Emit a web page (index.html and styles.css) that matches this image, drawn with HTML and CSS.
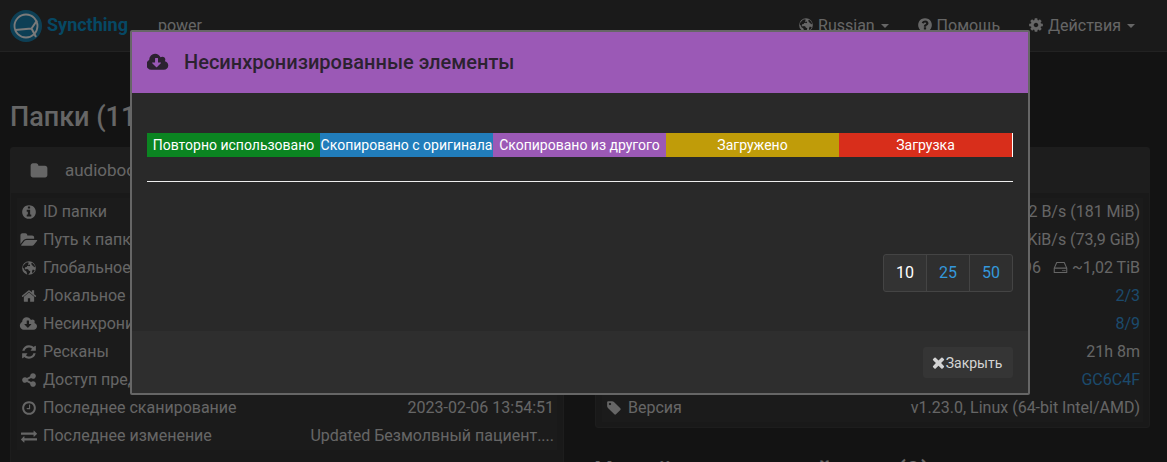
FILE: index.html
```html
<!DOCTYPE html>
<html lang="ru">
<head>
<meta charset="utf-8">
<title>Syncthing</title>
<link rel="stylesheet" href="styles.css">
</head>
<body>
<svg class="defs" xmlns="http://www.w3.org/2000/svg">
  <symbol id="i-folder" viewBox="0 0 1792 1792"><path d="M1728 608v704q0 92-66 158t-158 66h-1216q-92 0-158-66t-66-158v-960q0-92 66-158t158-66h320q92 0 158 66t66 158v32h672q92 0 158 66t66 158z"/></symbol>
  <symbol id="i-home" viewBox="0 0 1792 1792"><path d="M1472 992v480q0 26-19 45t-45 19h-384v-384h-256v384h-384q-26 0-45-19t-19-45v-480q0-1 .5-3t.5-3l575-474 575 474q1 2 1 6zm223-69l-62 74q-8 9-21 11h-3q-13 0-21-7l-692-577-692 577q-12 8-24 7-13-2-21-11l-62-74q-8-10-7-23.5t11-21.5l719-599q32-26 76-26t76 26l244 204v-195q0-14 9-23t23-9h192q14 0 23 9t9 23v408l219 182q10 8 11 21.5t-7 23.5z"/></symbol>
  <symbol id="i-info" viewBox="0 0 1792 1792"><path d="M1152 1376v-160q0-14-9-23t-23-9h-96v-512q0-14-9-23t-23-9h-320q-14 0-23 9t-9 23v160q0 14 9 23t23 9h96v320h-96q-14 0-23 9t-9 23v160q0 14 9 23t23 9h448q14 0 23-9t9-23zm-128-896v-160q0-14-9-23t-23-9h-192q-14 0-23 9t-9 23v160q0 14 9 23t23 9h192q14 0 23-9t9-23zm640 416q0 209-103 385.5t-279.5 279.5-385.5 103-385.5-103-279.5-279.5-103-385.5 103-385.5 279.5-279.5 385.5-103 385.5 103 279.5 279.5 103 385.5z"/></symbol>
  <symbol id="i-question" viewBox="0 0 1792 1792"><path d="M1024 1376v-192q0-14-9-23t-23-9h-192q-14 0-23 9t-9 23v192q0 14 9 23t23 9h192q14 0 23-9t9-23zm256-672q0-88-55.5-163t-138.5-116-170-41q-243 0-371 213-15 24 8 42l132 100q7 6 19 6 16 0 25-12 53-68 86-92 34-24 86-24 48 0 85.5 26t37.5 59q0 38-20 61t-68 45q-63 28-115.5 86.5t-52.5 125.5v36q0 14 9 23t23 9h192q14 0 23-9t9-23q0-19 21.5-49.5t54.5-49.5q32-18 49-28.5t46-35 44.5-48 28-60.5 12.5-81zm384 192q0 209-103 385.5t-279.5 279.5-385.5 103-385.5-103-279.5-279.5-103-385.5 103-385.5 279.5-279.5 385.5-103 385.5 103 279.5 279.5 103 385.5z"/></symbol>
  <symbol id="i-cog" viewBox="0 0 1792 1792"><path d="M1152 896q0-106-75-181t-181-75-181 75-75 181 75 181 181 75 181-75 75-181zm512-109v222q0 12-8 23t-20 13l-185 28q-19 54-39 91 35 50 107 138 10 12 10 25t-9 23q-27 37-99 108t-94 71q-12 0-26-9l-138-108q-44 23-91 38-16 136-29 186-7 28-36 28h-222q-14 0-24.5-8.5t-11.5-21.5l-28-184q-49-16-90-37l-141 107q-10 9-25 9-14 0-25-11-126-114-165-168-7-10-7-23 0-12 8-23 15-21 51-66.5t54-70.5q-27-50-41-99l-183-27q-13-2-21-12.5t-8-23.5v-222q0-12 8-23t19-13l186-28q14-46 39-92-40-57-107-138-10-12-10-24 0-10 9-23 26-36 98.5-107.5t94.5-71.5q13 0 26 10l138 107q44-23 91-38 16-136 29-186 7-28 36-28h222q14 0 24.5 8.5t11.5 21.5l28 184q49 16 90 37l142-107q9-9 24-9 13 0 25 10 129 119 165 170 7 8 7 22 0 12-8 23-15 21-51 66.5t-54 70.5q26 50 41 98l183 28q13 2 21 12.5t8 23.5z"/></symbol>
  <symbol id="i-cloud" viewBox="0 0 1920 1792"><path d="M1216 928q0-14-9-23t-23-9h-224v-352q0-13-9.5-22.5t-22.5-9.5h-192q-13 0-22.5 9.5t-9.5 22.5v352h-224q-13 0-22.5 9.5t-9.5 22.5q0 14 9 23l352 352q9 9 23 9t23-9l351-351q10-12 10-24zm640 224q0 159-112.5 271.5t-271.5 112.5h-1088q-185 0-316.5-131.5t-131.5-316.5q0-130 70-240t188-165q-2-30-2-43 0-212 150-362t362-150q156 0 285.5 87t188.5 231q71-62 166-62 106 0 181 75t75 181q0 76-41 138 130 31 213.5 135.5t83.5 238.5z"/></symbol>
  <symbol id="i-clock" viewBox="0 0 1792 1792"><path d="M1024 544v448q0 14-9 23t-23 9h-320q-14 0-23-9t-9-23v-64q0-14 9-23t23-9h224v-352q0-14 9-23t23-9h64q14 0 23 9t9 23zm416 352q0-148-73-273t-198-198-273-73-273 73-198 198-73 273 73 273 198 198 273 73 273-73 198-198 73-273zm224 0q0 209-103 385.5t-279.5 279.5-385.5 103-385.5-103-279.5-279.5-103-385.5 103-385.5 279.5-279.5 385.5-103 385.5 103 279.5 279.5 103 385.5z"/></symbol>
  <symbol id="i-refresh" viewBox="0 0 1792 1792"><path d="M1639 1056q0 5-1 7-64 268-268 434.5t-478 166.5q-146 0-282.5-55t-243.5-157l-129 129q-19 19-45 19t-45-19-19-45v-448q0-26 19-45t45-19h448q26 0 45 19t19 45-19 45l-137 137q71 66 161 102t187 36q134 0 250-65t186-179q11-17 53-117 8-23 30-23h192q13 0 22.5 9.5t9.5 22.5zm25-800v448q0 26-19 45t-45 19h-448q-26 0-45-19t-19-45 19-45l138-138q-148-137-349-137-134 0-250 65t-186 179q-11 17-53 117-8 23-30 23h-199q-13 0-22.5-9.5t-9.5-22.5v-7q65-268 270-434.5t480-166.5q146 0 284 55.5t245 156.5l130-129q19-19 45-19t45 19 19 45z"/></symbol>
  <symbol id="i-share" viewBox="0 0 1792 1792"><path d="M1344 1024q133 0 226.5 93.5t93.5 226.5-93.5 226.5-226.5 93.5-226.5-93.5-93.5-226.5q0-12 2-34l-360-180q-92 86-218 86-133 0-226.5-93.5t-93.5-226.5 93.5-226.5 226.5-93.5q126 0 218 86l360-180q-2-22-2-34 0-133 93.5-226.5t226.5-93.5 226.5 93.5 93.5 226.5-93.5 226.5-226.5 93.5q-126 0-218-86l-360 180q2 22 2 34t-2 34l360 180q92-86 218-86z"/></symbol>
  <symbol id="i-exchange" viewBox="0 0 1792 1792"><path d="M1792 1184v192q0 13-9.5 22.5t-22.5 9.5h-1376v192q0 13-9.5 22.5t-22.5 9.5q-12 0-24-10l-319-320q-9-9-9-22 0-14 9-23l320-320q9-9 23-9 13 0 22.5 9.5t9.5 22.5v192h1376q13 0 22.5 9.5t9.5 22.5zm0-544q0 14-9 23l-320 320q-9 9-23 9-13 0-22.5-9.5t-9.5-22.5v-192h-1376q-13 0-22.5-9.5t-9.5-22.5v-192q0-13 9.5-22.5t22.5-9.5h1376v-192q0-14 9-23t23-9q12 0 24 10l319 319q9 9 9 23z"/></symbol>
  <symbol id="i-tag" viewBox="0 0 1792 1792"><path d="M576 448q0-53-37.5-90.5t-90.5-37.5-90.5 37.5-37.5 90.5 37.5 90.5 90.5 37.5 90.5-37.5 37.5-90.5zm1067 576q0 53-37 90l-491 492q-39 37-91 37-53 0-90-37l-715-716q-38-37-64.5-101t-26.5-117v-416q0-52 38-90t90-38h416q53 0 117 26.5t102 64.5l715 714q37 39 37 91z"/></symbol>
  <symbol id="i-open" viewBox="0 0 1920 1792"><path d="M1879 952q0 31-31 66l-336 396q-43 51-120.5 86.5t-143.5 35.5h-1088q-34 0-60.5-13t-26.5-43q0-31 31-66l336-396q43-51 120.5-86.5t143.5-35.5h1088q34 0 60.5 13t26.5 43zm-343-344v160h-832q-94 0-197 47.5t-164 119.5l-337 396-5 6q0-4-.5-12.5t-.5-12.5v-960q0-92 66-158t158-66h320q92 0 158 66t66 158v32h544q92 0 158 66t66 158z"/></symbol>
  <symbol id="i-times" viewBox="0 0 1792 1792"><path d="M1490 1322q0 40-28 68l-136 136q-28 28-68 28t-68-28l-294-294-294 294q-28 28-68 28t-68-28l-136-136q-28-28-28-68t28-68l294-294-294-294q-28-28-28-68t28-68l136-136q28-28 68-28t68 28l294 294 294-294q28-28 68-28t68 28l136 136q28 28 28 68t-28 68l-294 294 294 294q28 28 28 68z"/></symbol>
  <symbol id="i-globe" viewBox="0 0 1792 1792"><path fill-rule="evenodd" d="M896 128a768 768 0 1 0 0 1536a768 768 0 0 0 0-1536zM560 300l250-40 60 110-90 90 60 90 130-40 60 130-130 70-60-60-150 20-50 110-170 20-60 140 110 130 150-60 150 60 50 110 170 70-40 170-170 210-130-20-70-230-50-120-190-100-60-190-130-130 60-220zM1180 300l160 70 170 190 60 200-60 60-80-40-50-120-90-30-60-110-80-40zM1290 1080l140 20 110 60-150 240-120 60-40-110z"/></symbol>
  <symbol id="i-hdd" viewBox="0 0 24 20"><path fill="none" stroke="currentColor" stroke-width="1.7" stroke-linejoin="round" d="M6 2h12l4 9v7H2v-7zM2 11h20"/><rect x="15" y="14" width="2" height="1.8"/><rect x="18" y="14" width="2" height="1.8"/></symbol>
</svg>

<header class="navbar">
  <div class="brand">
    <svg class="logo" viewBox="0 0 32 32" xmlns="http://www.w3.org/2000/svg">
      <circle class="logo-disc" cx="16" cy="16" r="16"/>
      <circle class="logo-ring" cx="16" cy="16" r="11.500"/>
      <path class="logo-net" d="M27 10.500L21.500 18.500 5 20M21.500 18.500L26 27"/>
    </svg>
    <span class="brand-name">Syncthing</span>
  </div>
  <span class="host">power</span>
  <nav class="nav-right">
    <span class="nav-item"><svg class="ico"><use href="#i-globe"/></svg> Russian <i class="caret"></i></span>
    <span class="nav-item"><svg class="ico"><use href="#i-question"/></svg> Помощь</span>
    <span class="nav-item"><svg class="ico"><use href="#i-cog"/></svg> Действия <i class="caret"></i></span>
  </nav>
</header>

<main class="columns">
  <section class="column">
    <h3 class="heading">Папки (11)</h3>
    <div class="panel panel-tall">
      <div class="panel-head"><svg class="head-ico"><use href="#i-folder"/></svg><span>audiobooks</span></div>
      <div class="rows rows-end">
        <div class="row"><span class="label"><svg class="ico fw"><use href="#i-info"/></svg>ID папки</span></div>
        <div class="row"><span class="label"><svg class="ico fw"><use href="#i-open"/></svg>Путь к папке</span></div>
        <div class="row"><span class="label"><svg class="ico fw"><use href="#i-globe"/></svg>Глобальное состояние</span></div>
        <div class="row"><span class="label"><svg class="ico fw"><use href="#i-home"/></svg>Локальное состояние</span></div>
        <div class="row"><span class="label"><svg class="ico fw"><use href="#i-cloud"/></svg>Несинхронизированные элементы</span></div>
        <div class="row"><span class="label"><svg class="ico fw"><use href="#i-refresh"/></svg>Ресканы</span></div>
        <div class="row"><span class="label"><svg class="ico fw"><use href="#i-share"/></svg>Доступ предоставлен</span></div>
        <div class="row"><span class="label"><svg class="ico fw"><use href="#i-clock"/></svg>Последнее сканирование</span><span>2023-02-06 13:54:51</span></div>
        <div class="row"><span class="label"><svg class="ico fw"><use href="#i-exchange"/></svg>Последнее изменение</span><span>Updated Безмолвный пациент....</span></div>
      </div>
    </div>
  </section>
  <section class="column">
    <h3 class="heading">Эта система</h3>
    <div class="panel">
      <div class="panel-head"><span>power</span></div>
      <div class="rows rows-end">
        <div class="row"><span></span><span>2 B/s (181 MiB)</span></div>
        <div class="row"><span></span><span>KiB/s (73,9 GiB)</span></div>
        <div class="row"><span></span><span>96<svg class="disk"><use href="#i-hdd"/></svg> ~1,02 TiB</span></div>
        <div class="row"><span></span><a class="link">2/3</a></div>
        <div class="row"><span></span><a class="link">8/9</a></div>
        <div class="row"><span></span><span>21h 8m</span></div>
        <div class="row"><span></span><a class="link">GC6C4F</a></div>
        <div class="row"><span class="label"><svg class="ico fw"><use href="#i-tag"/></svg>Версия</span><span>v1.23.0, Linux (64-bit Intel/AMD)</span></div>
      </div>
    </div>
    <h3 class="heading next">Удалённые устройства (9)</h3>
  </section>
</main>

<div class="backdrop">
  <div class="modal">
    <div class="modal-head">
      <svg class="title-ico"><use href="#i-cloud"/></svg>
      <h4 class="modal-title">Несинхронизированные элементы</h4>
    </div>
    <div class="modal-body">
      <div class="bar">
        <div class="seg green">Повторно использовано</div>
        <div class="seg blue">Скопировано с оригинала</div>
        <div class="seg purple">Скопировано из другого</div>
        <div class="seg gold">Загружено</div>
        <div class="seg red">Загрузка</div>
      </div>
      <hr class="rule">
      <div class="pager">
        <span class="page active">10</span>
        <a class="page">25</a>
        <a class="page">50</a>
      </div>
    </div>
    <div class="modal-foot">
      <button class="close"><svg class="close-ico"><use href="#i-times"/></svg>Закрыть</button>
    </div>
  </div>
</div>
</body>
</html>
```
FILE: styles.css
```css
* { box-sizing: border-box; }
html, body { height: 100%; }
body {
  margin: 0;
  overflow: hidden;
  background: #272727;
  color: #ccc;
  font-family: Roboto, "Liberation Sans", sans-serif;
  font-size: 16px;
  line-height: 1.25;
}
.defs { display: none; }

.ico { width: 1em; height: 1em; fill: currentColor; vertical-align: -2px; }
.ico.fw { width: 20px; margin-right: 4px; flex: none; }

.navbar {
  display: flex;
  align-items: center;
  height: 52px;
  padding-left: 10px;
  background: #343434;
  border-bottom: 1px solid #444;
}
.brand { display: flex; align-items: center; gap: 5px; }
.logo { width: 32px; height: 32px; }
.logo-disc { fill: #1b7fab; }
.logo-ring { fill: none; stroke: #f4f4f4; stroke-width: 1.800; }
.logo-net { fill: none; stroke: #f4f4f4; stroke-width: 2; stroke-linejoin: round; }
.brand-name { color: #0d91c9; font-size: 18px; font-weight: 700; }
.host { margin-left: 30px; }
.nav-right { display: flex; gap: 28px; margin-left: auto; padding-right: 32px; }
.nav-item { white-space: nowrap; }
.caret {
  display: inline-block;
  width: 0;
  height: 0;
  margin-left: 2px;
  vertical-align: middle;
  border-top: 4px solid currentColor;
  border-left: 4px solid transparent;
  border-right: 4px solid transparent;
}

.columns {
  display: grid;
  grid-template-columns: 554px 555px;
  column-gap: 31px;
  padding: 0 0 0 10px;
}
.heading { margin: 51px 0 15px; font-size: 27px; font-weight: 500; line-height: 29px; white-space: nowrap; }
.heading.next { margin-top: 30px; }
.panel { background: #333; border: 1px solid #3a3a3a; border-radius: 3px; padding-bottom: 5px; }
.panel-tall { padding-bottom: 40px; }
.panel-head {
  display: flex;
  align-items: center;
  height: 45px;
  padding-left: 19px;
  font-size: 17px;
  background: #3a3a3a;
}
.head-ico { width: 18px; height: 18px; margin-right: 17px; fill: currentColor; }
.rows { padding: 5px 6px 0; }
.row {
  display: flex;
  justify-content: space-between;
  align-items: center;
  height: 28px;
  padding: 0 4px 0 2px;
  background: #363636;
  white-space: nowrap;
}
.rows-end .row { padding-right: 3px; }
.label { display: flex; align-items: center; }
.link { color: #3795d8; }
.disk { width: 15px; height: 13px; fill: currentColor; vertical-align: -1px; margin-left: 12px; }

.backdrop {
  position: fixed;
  inset: 0;
  padding: 30px 0 0 130px;
  background: rgba(0, 0, 0, 0.5);
}
.modal {
  width: 900px;
  height: 365px;
  background: #292929;
  border: 2px solid #666;
  border-radius: 2px;
}
.modal-head {
  display: flex;
  align-items: center;
  height: 61px;
  padding: 0 15px;
  background: #9b59b6;
  color: #2c2230;
}
.title-ico { width: 22px; height: 21px; fill: currentColor; margin-right: 15px; }
.modal-title { margin: 0; font-size: 20px; font-weight: 500; }
.modal-body { height: 238px; padding: 40px 15px 0; }
.bar { display: flex; height: 24px; background: #fff; padding-right: 1px; color: #fff; font-size: 14px; line-height: 24px; text-align: center; }
.seg { flex: 1; white-space: nowrap; }
.green { background: #0b8421; }
.blue { background: #217dbb; }
.purple { background: #9b59b6; }
.gold { background: #c09c09; }
.red { background: #d82e1b; }
.rule { height: 1px; margin: 24px 0 0; border: 0; background: #eee; }
.pager {
  display: flex;
  justify-content: flex-end;
  margin-top: 72px;
}
.page {
  width: 44px;
  height: 38px;
  line-height: 36px;
  text-align: center;
  color: #3498db;
  background: #2f2f2f;
  border: 1px solid #444;
  margin-left: -1px;
}
.page:first-child { border-radius: 3px 0 0 3px; }
.page:last-child { border-radius: 0 3px 3px 0; }
.page.active { color: #fff; background: #333; }
.modal-foot {
  display: flex;
  justify-content: flex-end;
  height: 62px;
  padding: 16px 15px;
  background: #2e2e2e;
}
.close {
  display: flex;
  align-items: center;
  justify-content: center;
  width: 90px;
  height: 31px;
  padding: 0 4px 0 0;
  border: 0;
  border-radius: 3px;
  background: #353535;
  color: #d4d4d4;
  font: 14px Roboto, "Liberation Sans", sans-serif;
}
.close-ico { width: 17px; height: 17px; margin-right: -1px; fill: currentColor; }
```
